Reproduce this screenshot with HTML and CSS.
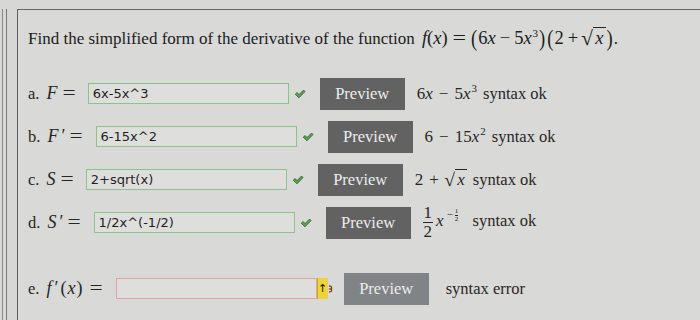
FILE: index.html
```html
<!DOCTYPE html>
<html>
<head>
<meta charset="utf-8">
<link rel="stylesheet" href="styles.css">
</head>
<body>
<div class="outer">
  <div class="inner">
    <div class="panel">
      <p class="q">Find the simplified form of the derivative of the function <span class="m"><i>f</i>(<i>x</i>)<span class="eq">=</span><span class="bp">(</span>6<i>x</i><span class="op">−</span>5<i>x</i><sup>3</sup><span class="bp">)</span><span class="bp">(</span>2<span class="op">+</span><span class="sq"><span class="rt">√</span><span class="rad"><i>x</i></span></span><span class="bp">)</span></span>.</p>

      <div class="row ra">
        <span class="lab">a. <span class="mv"><i>F</i><span class="eq">=</span></span></span>
        <input class="inp ok" type="text" value="6x-5x^3" readonly>
        <svg class="chk" viewBox="0 0 12 10" width="12" height="10"><path d="M1.2 5.2 L3.2 3.6 L5 5.6 L9.6 1 L11 2.6 L5 8.8 Z" fill="#5aa552" stroke="#2f5a2c" stroke-width="0.8" stroke-linejoin="round"/></svg>
        <span class="btn">Preview</span>
        <span class="res"><span class="mv">6<i>x</i><span class="op">−</span>5<i>x</i><sup>3</sup></span> syntax ok</span>
      </div>

      <div class="row">
        <span class="lab">b. <span class="mv"><i>F</i><span class="pr">′</span><span class="eq">=</span></span></span>
        <input class="inp ok" type="text" value="6-15x^2" readonly>
        <svg class="chk" viewBox="0 0 12 10" width="12" height="10"><path d="M1.2 5.2 L3.2 3.6 L5 5.6 L9.6 1 L11 2.6 L5 8.8 Z" fill="#5aa552" stroke="#2f5a2c" stroke-width="0.8" stroke-linejoin="round"/></svg>
        <span class="btn">Preview</span>
        <span class="res"><span class="mv">6<span class="op">−</span>15<i>x</i><sup>2</sup></span> syntax ok</span>
      </div>

      <div class="row">
        <span class="lab">c. <span class="mv"><i>S</i><span class="eq">=</span></span></span>
        <input class="inp ok" type="text" value="2+sqrt(x)" readonly>
        <svg class="chk" viewBox="0 0 12 10" width="12" height="10"><path d="M1.2 5.2 L3.2 3.6 L5 5.6 L9.6 1 L11 2.6 L5 8.8 Z" fill="#5aa552" stroke="#2f5a2c" stroke-width="0.8" stroke-linejoin="round"/></svg>
        <span class="btn">Preview</span>
        <span class="res"><span class="mv">2<span class="op">+</span><span class="sq"><span class="rt">√</span><span class="rad"><i>x</i></span></span></span> syntax ok</span>
      </div>

      <div class="row">
        <span class="lab">d. <span class="mv"><i>S</i><span class="pr">′</span><span class="eq">=</span></span></span>
        <input class="inp ok" type="text" value="1/2x^(-1/2)" readonly>
        <svg class="chk" viewBox="0 0 12 10" width="12" height="10"><path d="M1.2 5.2 L3.2 3.6 L5 5.6 L9.6 1 L11 2.6 L5 8.8 Z" fill="#5aa552" stroke="#2f5a2c" stroke-width="0.8" stroke-linejoin="round"/></svg>
        <span class="btn">Preview</span>
        <span class="res"><span class="mv"><span class="frac"><span class="num">1</span><span class="den">2</span></span><i>x</i><span class="ex">−<span class="sfrac"><span class="snum">1</span><span class="sden">2</span></span></span></span> syntax ok</span>
      </div>

      <div class="row re">
        <span class="lab">e. <span class="mv"><i>f</i><span class="pr">′</span><span class="pa">(<i class="px">x</i>)</span><span class="eq">=</span></span></span>
        <input class="inp bad" type="text" value="" readonly>
        <span class="ind">↑</span>
        <svg class="brk" viewBox="0 0 5 8" width="5" height="8"><path d="M1 1 Q4 1 3.5 3.5 L2 4 L3.5 4.5 Q4 7 1 7" fill="none" stroke="#7a3a1a" stroke-width="1.3"/></svg>
        <span class="btn dim">Preview</span>
        <span class="res err">syntax error</span>
      </div>
    </div>
  </div>
</div>
</body>
</html>
```

FILE: styles.css
```css
html, body {
  margin: 0;
  padding: 0;
}

body {
  width: 700px;
  height: 320px;
  overflow: hidden;
  background: #d7d7d5;
  font-family: "Liberation Serif", "Times New Roman", serif;
  color: #262626;
}

.outer {
  margin-left: 2px;
  height: 320px;
  border-left: 1.5px solid #8a8a8a;
  padding-left: 3px;
}

.inner {
  height: 320px;
  border-left: 1.5px solid #7a7a7a;
  padding-left: 10px;
}

.panel {
  margin-top: 9px;
  height: 300px;
  border-left: 1.5px solid #5e5e5e;
  border-top: 1.5px solid #666;
  padding-left: 10px;
  padding-top: 18px;
  background: #d9d9d7;
}

.q {
  margin: 0;
  font-size: 17px;
  line-height: 20px;
  white-space: nowrap;
  color: #1c1c1c;
}

.m {
  margin-left: 3px;
  font-size: 18.5px;
}

.q .op {
  margin: 0 4px;
}

.mv {
  font-size: 18px;
}

.lab .mv {
  margin-left: 3px;
}

i {
  font-style: italic;
}

.pr {
  margin-left: 3px;
}

.pa {
  margin-left: 2px;
}

.px {
  padding: 0 1px;
}

.eq {
  display: inline-block;
  margin: 0 6px;
  transform: scaleX(1.3);
}

.re .eq {
  margin: 0 7px 0 8px;
}

.op {
  margin: 0 6px;
}

.bp {
  display: inline-block;
  transform: scaleY(1.25);
  margin: 0 1px;
}

sup {
  font-size: 11px;
  line-height: 0;
  vertical-align: 7px;
  margin-left: 1px;
}

.sq {
  white-space: nowrap;
}

.rt {
  display: inline-block;
  transform: scale(1.15, 1.1);
  margin-right: 1px;
}

.rad {
  border-top: 1px solid #262626;
  padding: 0 2px;
}

.row {
  display: flex;
  align-items: center;
  height: 43px;
  font-size: 16.5px;
  white-space: nowrap;
}

.ra {
  margin-top: 23px;
}

.re {
  margin-top: 23px;
}

.lab {
  color: #262626;
}

.inp {
  box-sizing: border-box;
  flex: none;
  width: 201px;
  height: 21px;
  margin: 0 0 0 8px;
  padding: 0 4px;
  background: #dedfdd;
  border: 1.5px solid #8cc28c;
  font-family: "DejaVu Sans", Verdana, sans-serif;
  font-size: 13px;
  color: #1e1e1e;
  outline: none;
}

.inp.bad {
  border-color: #e2a3a3;
}

.chk {
  margin-left: 5px;
  flex: none;
}

.btn {
  box-sizing: border-box;
  flex: none;
  width: 85px;
  height: 32px;
  margin-left: 14px;
  background: #626262;
  color: #ececec;
  display: flex;
  align-items: center;
  justify-content: center;
  font-size: 16.5px;
}

.btn.dim {
  background: #818487;
  margin-left: 11px;
}

.res {
  margin-left: 12px;
  font-size: 16.5px;
}

.res .mv {
  font-size: 17px;
  margin-right: 2px;
}

.res.err {
  margin-left: 17px;
}

.frac {
  display: inline-block;
  vertical-align: middle;
  text-align: center;
  line-height: 16px;
  margin-right: 3px;
}

.num {
  display: block;
  border-bottom: 1px solid #262626;
  padding: 0 1px 1px;
}

.den {
  display: block;
  padding-top: 1px;
}

.ex {
  display: inline-block;
  font-size: 11px;
  vertical-align: 8px;
  margin: 0 8px 0 3px;
}

.sfrac {
  display: inline-block;
  vertical-align: middle;
  text-align: center;
  font-size: 7px;
  line-height: 7px;
  margin-left: 2px;
}

.snum {
  display: block;
  border-bottom: 0.5px solid #262626;
}

.sden {
  display: block;
}

.ind {
  box-sizing: border-box;
  width: 11px;
  height: 21px;
  background: #ecd43a;
  border-left: 1.5px solid #c9a820;
  display: flex;
  align-items: center;
  justify-content: center;
  font-family: "DejaVu Sans", sans-serif;
  font-size: 11px;
  color: #111;
  flex: none;
}

.brk {
  flex: none;
}
```
